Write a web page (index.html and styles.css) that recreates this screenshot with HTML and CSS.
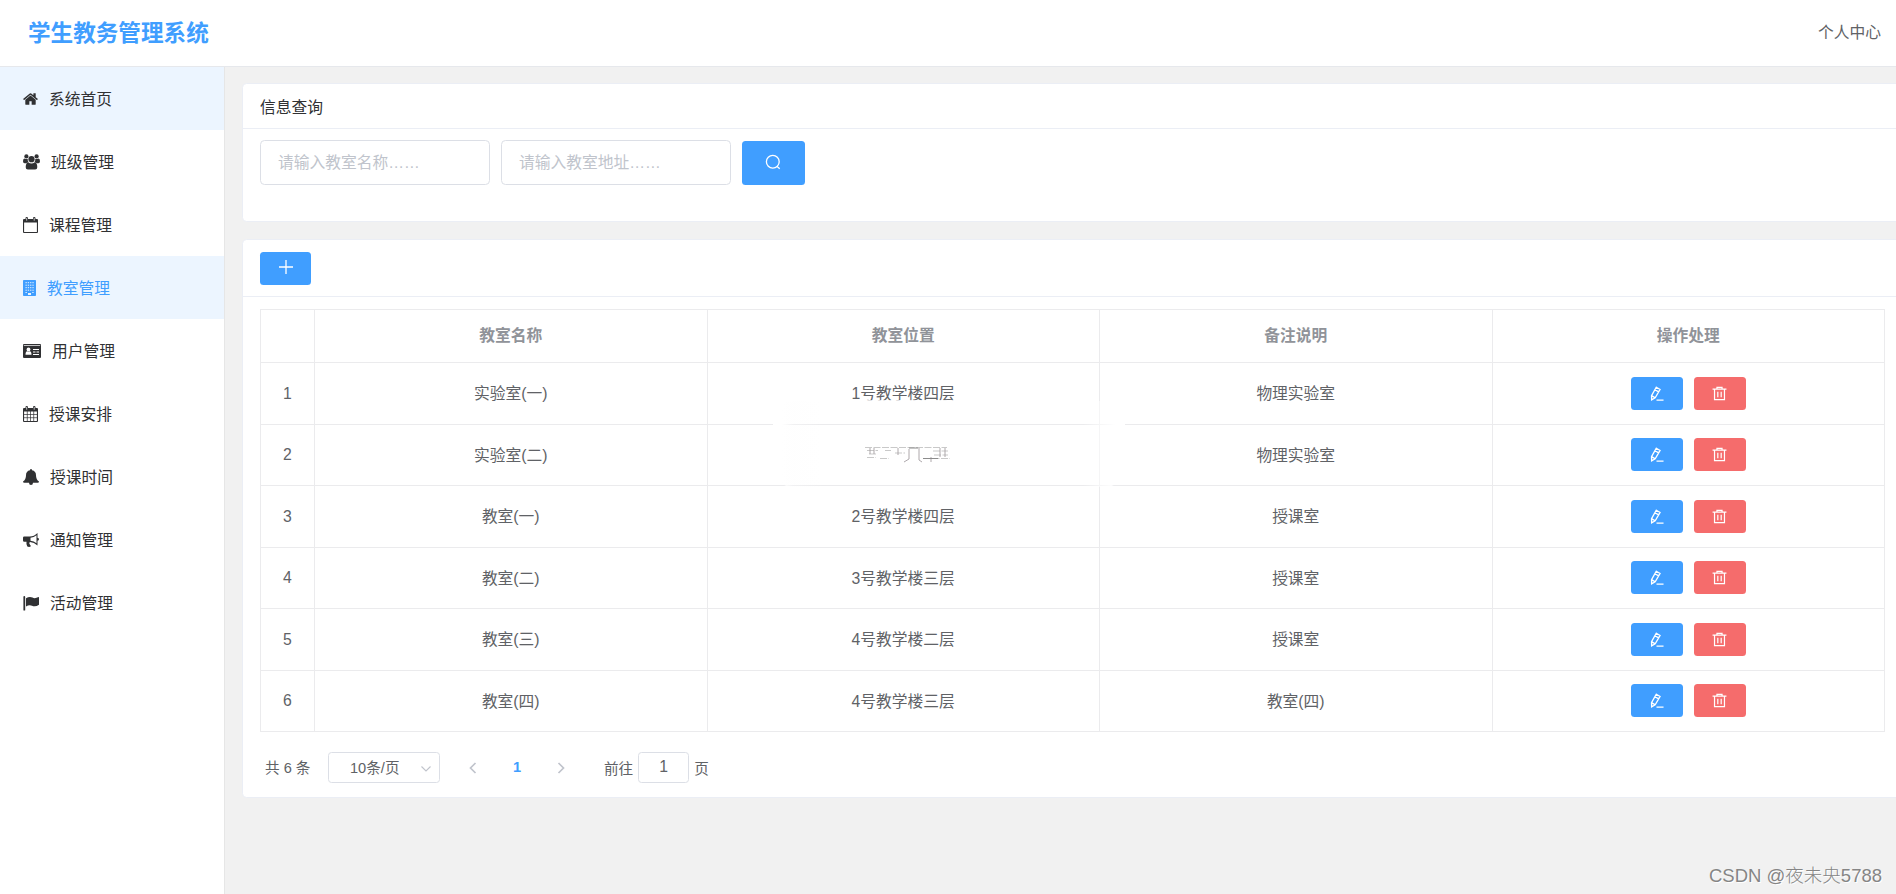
FILE: index.html
```html
<!DOCTYPE html>
<html lang="zh-CN">
<head>
    <meta charset="UTF-8">
    <title>学生教务管理系统</title>
    <link rel="stylesheet" href="styles.css">
</head>
<body>
<svg class="sprite" xmlns="http://www.w3.org/2000/svg">
    <symbol id="edit" viewBox="0 0 16 16">
        <path d="M7.8 1.300l4 2.300-5.200 9-3.800 2.100-.1-4.400zM6.300 4l4 2.300M2.700 10.300l3.900 2.300M8 15h7.500" fill="none" stroke="currentColor" stroke-width="1.400"/>
    </symbol>
    <symbol id="trash" viewBox="0 0 16 16">
        <path d="M.6 3.400h14.800M2.700 3.400v11.200h10.600V3.400M5.300 3V1.400h5.400V3M6.200 6v6M9.800 6v6" fill="none" stroke="currentColor" stroke-width="1.300"/>
    </symbol>
</svg>
<div class="header">
    <h1 class="title">学生教务管理系统</h1>
    <span class="user">个人中心</span>
</div>
<div class="container">
    <ul class="menu">
        <li class="hover">
            <svg width="15" height="16" viewBox="64 128 1664 1536" preserveAspectRatio="xMidYMid meet"><path d="M1472 992v480q0 26-19 45t-45 19h-384v-384h-256v384h-384q-26 0-45-19t-19-45v-480q0-1 .5-3t.5-3l575-474 575 474q1 2 1 6zm223-69l-62 74q-8 9-21 11h-3q-13 0-21-7l-692-577-692 577q-12 8-24 7-13-2-21-11l-62-74q-8-10-7-23.5t11-21.5l719-599q32-26 76-26t76 26l244 204v-195q0-14 9-23t23-9h192q14 0 23 9t9 23v408l219 182q10 8 11 21.5t-7 23.5z"/></svg>
            系统首页
        </li>
        <li>
            <svg width="17" height="16" viewBox="0 0 17 16"><circle cx="3.4" cy="2.4" r="2.1"/><circle cx="13.6" cy="2.4" r="2.1"/><circle cx="8.5" cy="5.2" r="3.1"/><path d="M0 7.3Q0 4.4 1.5 4.4q2 1 3.2.5Q4.5 7 5.7 8.2 4.2 8.3 3.3 9.2H1.6Q0 9.2 0 7.3zM17 7.3q0-2.9-1.5-2.9-2 1-3.2.5.2 2.1-1 3.3 1.500.1 2.4 1h1.700q1.600 0 1.600-1.900zM2.700 13.300q0-4.900 2.700-4.900 3.100 2 6.200 0 2.700 0 2.700 4.900 0 2.300-2.200 2.300H4.900q-2.200 0-2.200-2.300z"/></svg>
            班级管理
        </li>
        <li>
            <svg width="15" height="16" viewBox="0 0 15 16"><path d="M0 3q0-1 1-1h1.500V1Q2.500 0 3.700 0T5 1v1h5V1q0-1 1.200-1t1.300 1v1H14q1 0 1 1v12q0 1-1 1H1q-1 0-1-1zm1.100 2.500v9.400h12.800V5.500z" fill-rule="evenodd"/><path d="M3.700 1v2.700M11.200 1v2.700" stroke="#fff" stroke-width=".7"/></svg>
            课程管理
        </li>
        <li class="active">
            <svg width="13" height="16" viewBox="0 0 13 16"><path d="M.8 0h11.400q.8 0 .8.800v14.400q0 .8-.8.800H.8q-.8 0-.8-.8V.8Q0 0 .8 0zM5 13v2h3v-2z" fill-rule="evenodd"/><path d="M2.500 2.700h8.200M2.500 5.200h8.200M2.500 7.700h8.200M2.500 10.200h8.200M2.500 12.500h1.400M9.300 12.500h1.400" stroke="#ecf5ff" stroke-width="1" stroke-dasharray="1.300 1"/></svg>
            教室管理
        </li>
        <li>
            <svg width="18" height="16" viewBox="0 0 18 16"><path d="M1 1h16q1 0 1 1v12q0 1-1 1H1q-1 0-1-1V2q0-1 1-1z"/><path d="M.8 2.500h16.400" stroke="#fff" stroke-width=".7"/><circle cx="5.500" cy="6.500" r="1.900" fill="#fff"/><path d="M2.500 11.800q0-3.300 1.700-3.500 1.300.8 2.600 0 1.700.2 1.700 3.500z" fill="#fff"/><path d="M10 6.500h6M10 9h2.500M13.500 9H16M10 11.500h6" stroke="#fff" stroke-width="1.100"/></svg>
            用户管理
        </li>
        <li>
            <svg width="15" height="16" viewBox="0 0 15 16"><path d="M0 3q0-1 1-1h1.500V1Q2.500 0 3.700 0T5 1v1h5V1q0-1 1.200-1t1.300 1v1H14q1 0 1 1v12q0 1-1 1H1q-1 0-1-1zm1.100 2.500v9.400h12.800V5.500z" fill-rule="evenodd"/><path d="M3.700 1v2.700M11.200 1v2.700" stroke="#fff" stroke-width=".7"/><path d="M4.300 5v10M7.500 5v10M10.700 5v10M1 8.500h13M1 11.700h13" stroke="currentColor" stroke-width=".7"/></svg>
            授课安排
        </li>
        <li>
            <svg width="16" height="16" viewBox="0 0 16 16"><path d="M8 0q1 0 1 1.200 4 .8 4 5 0 4.500 3 6.300 0 1.200-1.200 1.200H10q0 2.300-2 2.300t-2-2.300H1.200Q0 13.700 0 12.500q3-1.800 3-6.300 0-4.200 4-5Q7 0 8 0z"/></svg>
            授课时间
        </li>
        <li>
            <svg width="16" height="16" viewBox="0 0 16 16"><path d="M1.200 4.500h5.600Q11 4.500 14.500 1v4.700q1.500.3 1.500 1.500t-1.500 1.500v4.800Q11 10.300 7 10q-1.400.8-.4 2 .3 1 1.400 2-1.200 1.500-3.700.600-1.300-2.600-.8-4.800H1.200Q0 9.800 0 8.500V5.800q0-1.300 1.200-1.300zM13.500 3.200Q11 5.200 7.500 5.700v3q3.500.4 6 2.500z" fill-rule="evenodd"/></svg>
            通知管理
        </li>
        <li>
            <svg width="16" height="16" viewBox="0 0 16 16"><path d="M1.200 1q1 0 1 1v13q0 .600-.5.600H.9q-.500 0-.500-.600V3Q0 1 1.200 1zM3 3.300Q6.500 1 9.500 2.600q2.500 1.300 6-.6.500 0 .500.600v7.200q-3.800 2.600-7 .9-2.800-1.200-6 .8z"/></svg>
            活动管理
        </li>
    </ul>
    <div class="main">
        <div class="card search">
            <div class="card-header">信息查询</div>
            <div class="card-body">
                <input class="input" type="text" placeholder="请输入教室名称……">
                <input class="input" type="text" placeholder="请输入教室地址……">
                <button class="btn btn-search">
                    <svg width="16" height="16" viewBox="0 0 16 16"><path d="M12 12.300l2.700 2.500M14.200 7.700a6.400 6.400 0 1 1-12.800 0 6.400 6.400 0 0 1 12.800 0z" fill="none" stroke="currentColor" stroke-width="1.300"/></svg>
                </button>
            </div>
        </div>
        <div class="card list">
            <div class="card-header">
                <button class="btn btn-add">
                    <svg width="14" height="14" viewBox="0 0 14 14"><path d="M7 0v14M0 7h14" stroke="currentColor" stroke-width="1.300"/></svg>
                </button>
            </div>
            <table class="table">
                <colgroup>
                    <col class="col-index"><col><col><col><col>
                </colgroup>
                <thead>
                <tr><th></th><th>教室名称</th><th>教室位置</th><th>备注说明</th><th>操作处理</th></tr>
                </thead>
                <tbody>
                <tr>
                    <td>1</td><td>实验室(一)</td><td>1号教学楼四层</td><td>物理实验室</td>
                    <td><div class="ops"><button class="btn"><svg><use href="#edit"/></svg></button><button class="btn danger"><svg><use href="#trash"/></svg></button></div></td>
                </tr>
                <tr>
                    <td>2</td><td>实验室(二)</td>
                    <td class="erased">
                        <svg class="smudge" width="86" height="18" viewBox="0 0 86 18"><path d="M0 2.500h82M2 5.500h11M20 5.500h6M30 8h10M68 6h15M69 10h14M4 9h8M2 12.500h9M15 13.500h9M59 13.500h26" stroke="#999" stroke-width=".7" stroke-dasharray="7 1.500"/><path d="M5 3v6M9 3v6M33 3v7M44 4v10l-5 3M54 3v12l3 2M75 3v9M80 3v9M66 12v5" fill="none" stroke="#887f84" stroke-width=".9"/><path d="M44 3h9M58 13.500h15" stroke="#666" stroke-width="1"/></svg>
                    </td>
                    <td>物理实验室</td>
                    <td><div class="ops"><button class="btn"><svg><use href="#edit"/></svg></button><button class="btn danger"><svg><use href="#trash"/></svg></button></div></td>
                </tr>
                <tr>
                    <td>3</td><td>教室(一)</td><td>2号教学楼四层</td><td>授课室</td>
                    <td><div class="ops"><button class="btn"><svg><use href="#edit"/></svg></button><button class="btn danger"><svg><use href="#trash"/></svg></button></div></td>
                </tr>
                <tr>
                    <td>4</td><td>教室(二)</td><td>3号教学楼三层</td><td>授课室</td>
                    <td><div class="ops"><button class="btn"><svg><use href="#edit"/></svg></button><button class="btn danger"><svg><use href="#trash"/></svg></button></div></td>
                </tr>
                <tr>
                    <td>5</td><td>教室(三)</td><td>4号教学楼二层</td><td>授课室</td>
                    <td><div class="ops"><button class="btn"><svg><use href="#edit"/></svg></button><button class="btn danger"><svg><use href="#trash"/></svg></button></div></td>
                </tr>
                <tr>
                    <td>6</td><td>教室(四)</td><td>4号教学楼三层</td><td>教室(四)</td>
                    <td><div class="ops"><button class="btn"><svg><use href="#edit"/></svg></button><button class="btn danger"><svg><use href="#trash"/></svg></button></div></td>
                </tr>
                </tbody>
            </table>
            <div class="pagination">
                <span class="total">共 6 条</span>
                <span class="select">10条/页
                    <svg width="10" height="6" viewBox="0 0 10 6"><path d="M.5.500L5 5 9.500.500" fill="none" stroke="#c0c4cc" stroke-width="1.100"/></svg>
                </span>
                <svg class="arrow" width="8" height="12" viewBox="0 0 8 12"><path d="M6.500 1l-5 5 5 5" fill="none" stroke="#c0c4cc" stroke-width="1.700"/></svg>
                <span class="page">1</span>
                <svg class="arrow" width="8" height="12" viewBox="0 0 8 12"><path d="M1.500 1l5 5-5 5" fill="none" stroke="#c0c4cc" stroke-width="1.700"/></svg>
                <span class="jump">前往</span>
                <input class="jump-input" type="text" value="1">
                <span>页</span>
            </div>
        </div>
    </div>
</div>
<div class="watermark">CSDN @夜未央5788</div>
</body>
</html>
```

FILE: styles.css
```css
* {
    margin: 0;
    padding: 0;
    box-sizing: border-box;
}

body {
    height: 894px;
    overflow: hidden;
    font: 15.75px "Liberation Sans", "Noto Sans CJK SC", sans-serif;
    color: #303133;
    background-color: #f1f1f1;
}

ul {
    list-style: none;
}

input, button {
    font: inherit;
    border: none;
    outline: none;
}

.sprite {
    display: none;
}

.header {
    height: 67px;
    padding: 0 15px 3px 28px;
    display: flex;
    justify-content: space-between;
    align-items: center;
    background-color: #fff;
    border-bottom: 1px solid #e6e8ec;
}

.title {
    font-size: 22.6px;
    font-weight: bold;
    color: #409eff;
}

.user {
    color: #606266;
}

.container {
    display: flex;
    height: 827px;
}

/* 左侧菜单 */
.menu {
    flex: none;
    width: 225px;
    background-color: #fff;
    border-right: 1px solid #e6e6e6;
}

.menu li {
    height: 63px;
    padding-left: 22.5px;
    display: flex;
    align-items: center;
    gap: 11.5px;
    cursor: pointer;
}

.menu svg {
    margin-top: 1px;
    fill: currentColor;
}

.menu .hover {
    background-color: #ecf5ff;
}

.menu .active {
    color: #409eff;
    background-color: #ecf5ff;
}

/* 右侧内容 */
.main {
    flex: none;
    width: 1690px;
    padding: 16px 0 0 17px;
}

.card {
    background-color: #fff;
    border: 1px solid #ebeef5;
    border-radius: 4.5px;
}

.card-header {
    padding-left: 17px;
    display: flex;
    align-items: center;
    border-bottom: 1px solid #ebeef5;
}

.search {
    height: 139px;
    margin-bottom: 17px;
}

.search .card-header {
    height: 45px;
}

.card-body {
    display: flex;
    align-items: flex-end;
    gap: 11px;
    padding: 11px 0 0 17px;
}

.input {
    width: 230px;
    height: 45px;
    padding: 0 17px;
    border: 1px solid #dcdfe6;
    border-radius: 4.5px;
}

.input::placeholder {
    color: #c0c4cc;
}

.btn {
    width: 52px;
    height: 33px;
    display: flex;
    align-items: center;
    justify-content: center;
    color: #fff;
    background-color: #409eff;
    border-radius: 3.5px;
    cursor: pointer;
}

.btn-search {
    width: 63px;
    height: 44px;
    padding: 0 1px 2px 0;
}

.btn-add {
    width: 51px;
    padding-bottom: 3px;
}

.danger {
    background-color: #f56c6c;
}

.list {
    height: 559px;
}

.list .card-header {
    height: 57px;
}

.table {
    width: 1625px;
    margin: 12px 0 0 17px;
    table-layout: fixed;
    border-collapse: collapse;
    text-align: center;
    color: #606266;
}

.col-index {
    width: 54px;
}

.table th, .table td {
    border: 1px solid #ebebed;
}

.table th {
    height: 53px;
    padding-bottom: 3px;
    font-weight: bold;
    color: #909399;
}

.table td {
    height: 61px;
    padding-bottom: 2px;
}

.table td:first-child {
    padding-bottom: 0;
}

.table td:last-child {
    padding-bottom: 1px;
}

.table tbody tr:nth-child(odd) td {
    height: 62px;
}

.ops {
    display: flex;
    justify-content: center;
    gap: 11px;
}

.ops svg {
    width: 15px;
    height: 15px;
}

/* 被擦除的单元格 */
.table .erased {
    position: relative;
}

.erased::before {
    content: "";
    position: absolute;
    left: 65px;
    top: -24px;
    width: 352px;
    height: 86px;
    background: linear-gradient(90deg, #fff 9px, rgba(253, 253, 253, .3) 20px, rgba(253, 253, 253, 0) 50px, rgba(253, 253, 253, 0) 310px, rgba(255, 255, 255, .5) 326px, #fff 343px);
    border-radius: 20px;
}

.erased::after {
    content: "";
    position: absolute;
    left: 155px;
    top: -25px;
    width: 95px;
    height: 5px;
    background-color: rgba(255, 255, 255, .8);
}

.smudge {
    position: relative;
    left: 5px;
    display: inline-block;
    vertical-align: middle;
    opacity: .75;
}

.pagination {
    height: 31px;
    margin: 20px 0 0 22px;
    display: flex;
    align-items: center;
    font-size: 14.6px;
    color: #606266;
}

.total {
    width: 46px;
    white-space: nowrap;
}

.total, .page {
    padding-bottom: 2px;
}

.select {
    width: 112px;
    height: 31px;
    margin: 0 29px 0 17px;
    padding: 0 8px 2px 21px;
    display: flex;
    align-items: center;
    justify-content: space-between;
    border: 1px solid #dcdfe6;
    border-radius: 3.5px;
}

.select svg {
    margin-top: 5px;
}

.page {
    width: 80px;
    text-align: center;
    font-weight: bold;
    color: #409eff;
}

.jump {
    margin-left: 39px;
}

.jump-input {
    width: 51px;
    height: 31px;
    margin: 0 5px;
    padding-bottom: 2px;
    text-align: center;
    font-size: 15.75px;
    color: #606266;
    border: 1px solid #dcdfe6;
    border-radius: 3.5px;
}

.watermark {
    position: absolute;
    right: 14px;
    bottom: 7px;
    font-size: 18.5px;
    font-weight: 300;
    color: #858585;
    text-shadow: 1px 1px #fff;
}
```
